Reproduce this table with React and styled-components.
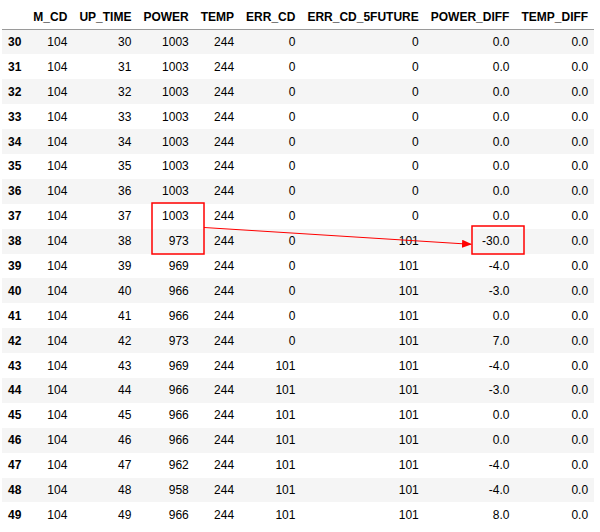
import styled, { createGlobalStyle } from 'styled-components';

const GlobalStyle = createGlobalStyle`
  body {
    margin: 0;
    background: #ffffff;
    font-family: "Liberation Sans", Arial, sans-serif;
  }
`;

const Page = styled.div`
  padding: 4px 0 0 2px;
`;

const Frame = styled.div`
  position: relative;
  display: inline-block;
`;

const Table = styled.table`
  border-collapse: collapse;
  border-spacing: 0;
  color: #000;
  font-size: 12px;
  font-family: "Liberation Sans", Arial, sans-serif;
`;

const Head = styled.thead`
  border-bottom: 1px solid #9a9a9a;
`;

const HeadCell = styled.th`
  text-align: right;
  font-weight: bold;
  padding: 0 6px;
  height: 25px;
  vertical-align: middle;
  white-space: nowrap;
`;

const Row = styled.tr`
  height: 24.9px;
  background: ${(p) => (p.$striped ? '#f5f5f5' : 'transparent')};
`;

const IndexCell = styled.th`
  text-align: right;
  font-weight: bold;
  padding: 0 6px;
  vertical-align: middle;
`;

const Cell = styled.td`
  text-align: right;
  padding: 0 6px;
  vertical-align: middle;
  white-space: nowrap;
`;

const Overlay = styled.svg`
  position: absolute;
  left: 0;
  top: 0;
  pointer-events: none;
  overflow: visible;
`;

const columns = ['M_CD', 'UP_TIME', 'POWER', 'TEMP', 'ERR_CD', 'ERR_CD_5FUTURE', 'POWER_DIFF', 'TEMP_DIFF'];

const power = [1003, 1003, 1003, 1003, 1003, 1003, 1003, 1003, 973, 969, 966, 966, 973, 969, 966, 966, 966, 962, 958, 966];
const powerDiff = ['0.0', '0.0', '0.0', '0.0', '0.0', '0.0', '0.0', '0.0', '-30.0', '-4.0', '-3.0', '0.0', '7.0', '-4.0', '-3.0', '0.0', '0.0', '-4.0', '-4.0', '8.0'];

const rows = power.map((p, i) => {
  const idx = 30 + i;
  return {
    idx,
    values: [104, idx, p, 244, idx >= 43 ? 101 : 0, idx >= 38 ? 101 : 0, powerDiff[i], '0.0'],
  };
});

function App() {
  return (
    <Page>
      <GlobalStyle />
      <Frame>
        <Table>
          <Head>
            <tr>
              <HeadCell />
              {columns.map((c) => (
                <HeadCell key={c}>{c}</HeadCell>
              ))}
            </tr>
          </Head>
          <tbody>
            {rows.map((r, i) => (
              <Row key={r.idx} $striped={i % 2 === 0}>
                <IndexCell>{r.idx}</IndexCell>
                {r.values.map((v, j) => (
                  <Cell key={j}>{v}</Cell>
                ))}
              </Row>
            ))}
          </tbody>
        </Table>
        <Overlay width="600" height="532" viewBox="0 0 600 532">
          <defs>
            <marker id="head" markerWidth="10" markerHeight="8" refX="9" refY="4" orient="auto" markerUnits="userSpaceOnUse">
              <path d="M0,0 L10,4 L0,8 Z" fill="#ff0000" />
            </marker>
          </defs>
          <rect x="150" y="199" width="52" height="51" fill="none" stroke="#ff0000" strokeWidth="1.5" />
          <rect x="470" y="222" width="52" height="28" fill="none" stroke="#ff0000" strokeWidth="1.5" />
          <line x1="202" y1="223.5" x2="469" y2="240.3" stroke="#ff0000" strokeWidth="1" markerEnd="url(#head)" />
        </Overlay>
      </Frame>
    </Page>
  );
}

export default App;
